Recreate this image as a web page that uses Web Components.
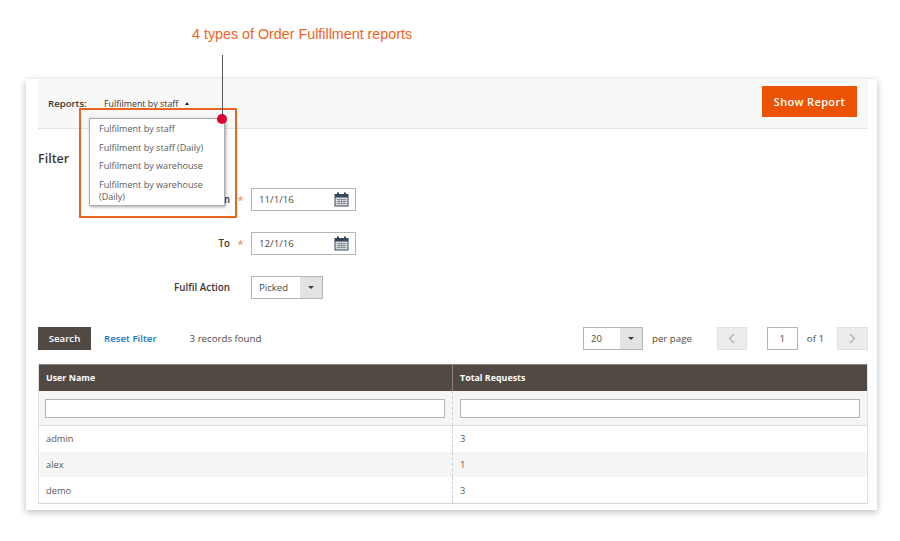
<!DOCTYPE html>
<html>
<head>
<meta charset="utf-8">
<title>Order Fulfilment reports</title>
<style>
  html, body { margin: 0; background: #fff; }
  body { font: 10px/1.2 "Open Sans", sans-serif; color: #41362f; }
</style>
</head>
<body>

<ful-page></ful-page>

<script>
/* calendar icon used by the date fields */
const CAL = `<svg width="15" height="15" viewBox="0 0 15 15">
  <rect x="0.5" y="2" width="14" height="12.5" fill="#34465a"/>
  <rect x="1.5" y="5.5" width="12" height="8" fill="#dfe3e6"/>
  <rect x="3" y="0.5" width="2" height="3.5" fill="#34465a"/>
  <rect x="10" y="0.5" width="2" height="3.5" fill="#34465a"/>
  <path d="M2.5 7.5h10M2.5 9.5h10M2.5 11.5h10M5 6.5v6M7.5 6.5v6M10 6.5v6" stroke="#7d8a96" stroke-width=".8" fill="none"/>
</svg>`;

class FulField extends HTMLElement {
  connectedCallback() {
    if (this._built) return;
    this._built = true;
    const shadow = this.attachShadow({ mode: 'open' });
    const req = this.hasAttribute('required');
    shadow.innerHTML = `
      <style>
        :host { display: grid; grid-template-columns: 192px 21px auto; align-items: center; height: 23px; }
        label { text-align: right; font-weight: 600; font-size: 9.8px; color: #41362f; }
        i { font-style: normal; color: #ee7d5f; text-align: center; font-size: 11px; }
      </style>
      <label>${this.getAttribute('label')}</label><i>${req ? '*' : ''}</i><slot></slot>
    `;
  }
}

class FulDate extends HTMLElement {
  connectedCallback() {
    if (this._built) return;
    this._built = true;
    const shadow = this.attachShadow({ mode: 'open' });
    shadow.innerHTML = `
      <style>
        :host {
          display: flex; align-items: center; justify-content: space-between;
          box-sizing: border-box; width: 105px; height: 23px; padding: 0 6px 0 7px;
          border: 1px solid #b5b5b5; background: #fff;
          font-size: 9.7px; color: #514943;
        }
        svg { display: block; }
      </style>
      <span><slot></slot></span>${CAL}
    `;
  }
}

class FulSelect extends HTMLElement {
  connectedCallback() {
    if (this._built) return;
    this._built = true;
    const shadow = this.attachShadow({ mode: 'open' });
    const w = this.getAttribute('width') || 72;
    shadow.innerHTML = `
      <style>
        :host {
          display: flex; align-items: stretch;
          box-sizing: border-box; width: ${w}px; height: 23px;
          border: 1px solid #b5b5b5; background: #fff;
          font-size: 9.6px; color: #514943;
        }
        span { flex: 1; display: flex; align-items: center; padding-left: 7px; }
        b { flex: none; width: 22px; background: #e3e3e3; display: flex; align-items: center; justify-content: center; }
        b::after { content: ""; border: 3px solid transparent; border-top: 3.5px solid #41362f; border-bottom: 0; }
      </style>
      <span><slot></slot></span><b></b>
    `;
  }
}

class FulPager extends HTMLElement {
  connectedCallback() {
    if (this._built) return;
    this._built = true;
    const shadow = this.attachShadow({ mode: 'open' });
    shadow.innerHTML = `
      <style>
        :host { display: flex; align-items: center; margin-left: auto; font-size: 9.7px; color: #514943; }
        .per { margin: 0 25px 0 9px; }
        .nav {
          box-sizing: border-box; width: 31px; height: 23px;
          border: 1px solid #e0e0e0; background: #ececec;
          display: flex; align-items: center; justify-content: center;
        }
        .nav.prev { width: 30px; }
        .cur {
          box-sizing: border-box; width: 31px; height: 23px; margin-left: 20px;
          border: 1px solid #b5b5b5; background: #fff;
          display: flex; align-items: center; justify-content: center;
        }
        .of { margin: 0 13px 0 9px; }
        svg { display: block; }
      </style>
      <ful-select width="60">20</ful-select>
      <span class="per">per page</span>
      <div class="nav prev"><svg width="7" height="11" viewBox="0 0 7 11"><path d="M6 1 1.5 5.5 6 10" fill="none" stroke="#a8a8a8" stroke-width="1.1"/></svg></div>
      <div class="cur">1</div>
      <span class="of">of 1</span>
      <div class="nav"><svg width="7" height="11" viewBox="0 0 7 11"><path d="M1 1l4.5 4.5L1 10" fill="none" stroke="#a8a8a8" stroke-width="1.1"/></svg></div>
    `;
  }
}

class FulGrid extends HTMLElement {
  connectedCallback() {
    if (this._built) return;
    this._built = true;
    const shadow = this.attachShadow({ mode: 'open' });
    const rows = [['admin', '3'], ['alex', '1'], ['demo', '3']];
    shadow.innerHTML = `
      <style>
        :host {
          display: grid; grid-template-columns: 413px 1fr;
          margin-top: 14px; font-size: 9.3px; color: #5a5a5a;
          border-bottom: 1px solid #d6d6d6;
          border-left: 1px solid #e3e3e3; border-right: 1px solid #e3e3e3;
        }
        .cell { display: flex; align-items: center; padding-left: 7px; box-sizing: border-box; }
        .cell:nth-of-type(even) { border-left: 1px dashed #cfcfcf; padding-left: 7px; }
        .head {
          height: 27px; background: #514943; color: #fff; font-weight: 700; font-size: 8.9px;
          border-top: 1px solid #8a8380;
        }
        .head:nth-of-type(even) { border-left: 1px solid #8a8380; }
        .filter { height: 35px; background: #f5f5f5; border-bottom: 1px solid #dedede; padding: 0 7px 0 6px; }
        .filter div { flex: 1; box-sizing: border-box; height: 19px; background: #fff; border: 1px solid #b5b5b5; }
        .row { height: 25.67px; }
        .alt { background: #f5f5f5; }
      </style>
      <div class="cell head">User Name</div><div class="cell head">Total Requests</div>
      <div class="cell filter"><div></div></div><div class="cell filter"><div></div></div>
      ${rows.map((r, i) => r.map(t => `<div class="cell row ${i === 1 ? 'alt' : ''}">${t}</div>`).join('')).join('')}
    `;
  }
}

class FulMenu extends HTMLElement {
  connectedCallback() {
    if (this._built) return;
    this._built = true;
    const shadow = this.attachShadow({ mode: 'open' });
    shadow.innerHTML = `
      <style>
        :host {
          position: absolute; left: 89px; top: 118px;
          box-sizing: border-box; width: 136px; height: 88px; padding: 4px 9px;
          display: flex; flex-direction: column; gap: 6px;
          background: #fff; border: 1px solid #adadad;
          box-shadow: 1px 1px 3px rgba(0,0,0,.35);
          font-size: 9.05px; line-height: 12.5px; color: #5b5b5b;
        }
      </style>
      <div>Fulfilment by staff</div>
      <div>Fulfilment by staff (Daily)</div>
      <div>Fulfilment by warehouse</div>
      <div>Fulfilment by warehouse<br>(Daily)</div>
    `;
  }
}

class FulPage extends HTMLElement {
  connectedCallback() {
    if (this._built) return;
    this._built = true;
    const shadow = this.attachShadow({ mode: 'open' });
    shadow.innerHTML = `
      <style>
        :host { display: block; position: relative; width: 900px; height: 541px; overflow: hidden; }
        h1 {
          margin: 0; height: 79px; box-sizing: border-box; padding: 26px 0 0 192px;
          font: 400 14.3px/17px "Liberation Sans", Arial, sans-serif; color: #f26322;
        }
        .card {
          box-sizing: border-box; width: 851px; height: 431px; margin-left: 26px; padding: 0 9px 0 12px;
          background: #fff; box-shadow: 0 2px 7px rgba(0,0,0,.28);
        }
        .bar {
          display: flex; align-items: center; height: 50px; box-sizing: border-box; padding: 0 11px 0 10px;
          background: #f8f8f8; border-bottom: 1px solid #e3e3e3;
        }
        .bar strong { font-weight: 600; font-size: 9.6px; width: 56px; }
        .bar .cur { font-size: 8.9px; color: #41362f; padding-top: 1px; }
        .bar .up { margin-left: 7px; border: 2.5px solid transparent; border-bottom: 3px solid #222; border-top: 0; }
        .show {
          margin-left: auto; width: 95px; height: 31px; margin-bottom: 4px;
          background: #eb5202; color: #fff; font-weight: 600; font-size: 11px; letter-spacing: .35px;
          display: flex; align-items: center; justify-content: center;
        }
        h2 { margin: 21px 0 21px; font-weight: 600; font-size: 12.5px; line-height: 17px; color: #41362f; }
        .form { display: flex; flex-direction: column; gap: 21px; }
        .tools { display: flex; align-items: center; margin-top: 28px; height: 23px; font-size: 9.7px; }
        .search {
          width: 53px; height: 23px; background: #514943; color: #fff; font-weight: 600;
          display: flex; align-items: center; justify-content: center;
        }
        .reset { margin-left: 13px; color: #1979c3; font-weight: 600; }
        .found { margin-left: 33px; color: #514943; }
        .box { position: absolute; left: 79px; top: 108px; box-sizing: border-box; width: 158px; height: 110px; border: 2px solid #e9641f; }
        .line { position: absolute; left: 222px; top: 55px; width: 1px; height: 64px; background: #555; }
        .dot { position: absolute; left: 217px; top: 114px; width: 10px; height: 10px; border-radius: 50%; background: #dc0032; }
      </style>
      <h1>4 types of Order Fulfillment reports</h1>
      <section class="card">
        <div class="bar">
          <strong>Reports:</strong>
          <span class="cur">Fulfilment by staff</span><span class="up"></span>
          <div class="show">Show Report</div>
        </div>
        <h2>Filter</h2>
        <div class="form">
          <ful-field label="From" required><ful-date>11/1/16</ful-date></ful-field>
          <ful-field label="To" required><ful-date>12/1/16</ful-date></ful-field>
          <ful-field label="Fulfil Action"><ful-select>Picked</ful-select></ful-field>
        </div>
        <div class="tools">
          <div class="search">Search</div>
          <span class="reset">Reset Filter</span>
          <span class="found">3 records found</span>
          <ful-pager></ful-pager>
        </div>
        <ful-grid></ful-grid>
      </section>
      <ful-menu></ful-menu>
      <div class="box"></div>
      <div class="line"></div>
      <div class="dot"></div>
    `;
  }
}

customElements.define('ful-field', FulField);
customElements.define('ful-date', FulDate);
customElements.define('ful-select', FulSelect);
customElements.define('ful-pager', FulPager);
customElements.define('ful-grid', FulGrid);
customElements.define('ful-menu', FulMenu);
customElements.define('ful-page', FulPage);
</script>
</body>
</html>
